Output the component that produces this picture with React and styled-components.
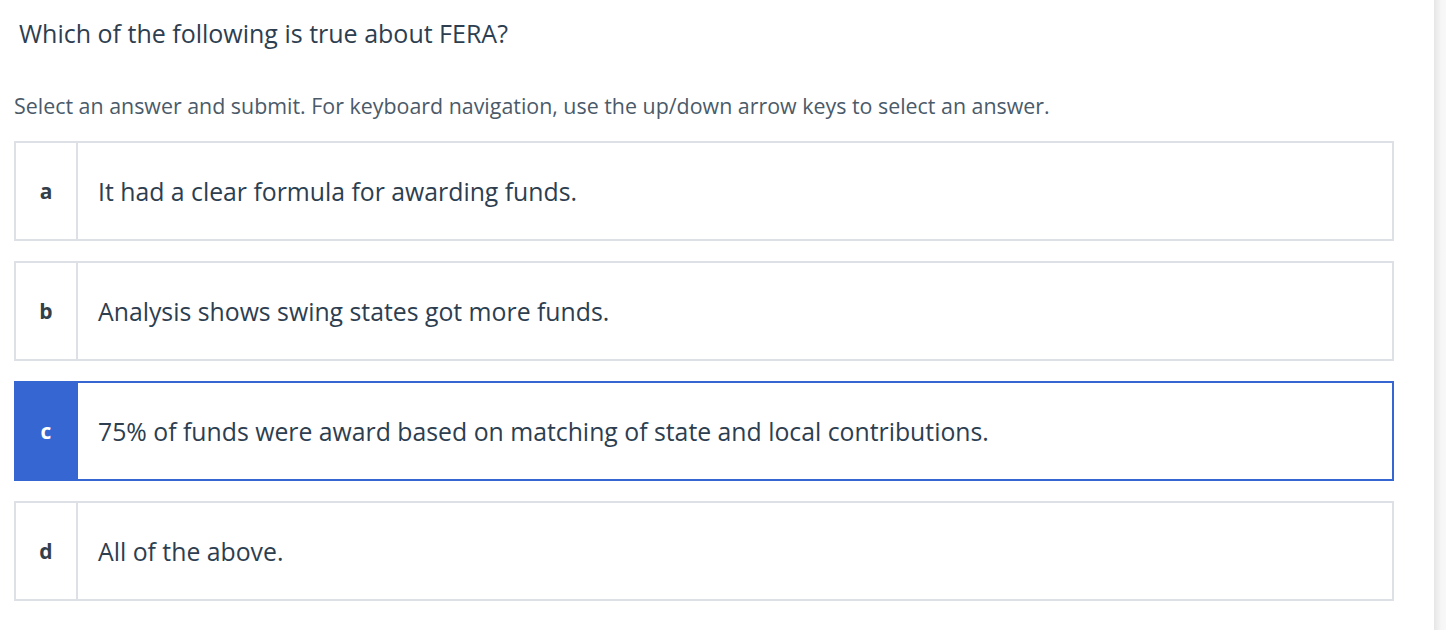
import React from "react";
import styled, { createGlobalStyle } from "styled-components";

const answers = [
  { key: "a", text: "It had a clear formula for awarding funds." },
  { key: "b", text: "Analysis shows swing states got more funds." },
  { key: "c", text: "75% of funds were award based on matching of state and local contributions.", selected: true },
  { key: "d", text: "All of the above." },
];

const App = () => {
  return (
    <Page>
      <GlobalStyle />
      <Main>
        <Question>Which of the following is true about FERA?</Question>
        <Hint>
          Select an answer and submit. For keyboard navigation, use the up/down arrow keys to select an answer.
        </Hint>
        <Options>
          {answers.map((a) => (
            <Option key={a.key} selected={a.selected}>
              <Letter $selected={a.selected}>{a.key}</Letter>
              <Text>{a.text}</Text>
            </Option>
          ))}
        </Options>
      </Main>
      <Edge />
    </Page>
  );
};

const GlobalStyle = createGlobalStyle`
  body {
    margin: 0;
    background: #fff;
    font-family: "Open Sans", "Liberation Sans", sans-serif;
  }
`;

const Page = styled.div`
  display: flex;
  height: 630px;
  overflow: hidden;
`;

const Main = styled.div`
  width: 1434px;
  box-sizing: border-box;
  padding: 14px 40px 0 14px;
`;

const Edge = styled.div`
  flex: 1;
  background: linear-gradient(to right, #e6e6e6, #f6f6f6 60%, #f8f8f8);
`;

const Question = styled.h1`
  margin: 0 0 0 5px;
  font-size: 25px;
  font-weight: 400;
  line-height: 38px;
  color: #2d3e50;
`;

const Hint = styled.p`
  margin: 40px 0 0 0;
  font-size: 21.4px;
  line-height: 28px;
  color: #4b5a69;
`;

const Options = styled.div`
  display: flex;
  flex-direction: column;
  gap: 20px;
  margin-top: 21px;
`;

const Option = styled.div.withConfig({ shouldForwardProp: (p) => p !== "selected" })`
  display: grid;
  grid-template-columns: 62px 1fr;
  height: 100px;
  box-sizing: border-box;
  border: 2px solid ${(p) => (p.selected ? "#3566d2" : "#dde1e5")};
  background: #fff;
`;

const Letter = styled.div`
  display: flex;
  align-items: center;
  justify-content: center;
  font-size: 21px;
  font-weight: 700;
  color: ${(p) => (p.$selected ? "#fff" : "#333f4b")};
  background: ${(p) => (p.$selected ? "#3566d2" : "transparent")};
  border-right: 2px solid ${(p) => (p.$selected ? "#3566d2" : "#dde1e5")};
  margin-left: ${(p) => (p.$selected ? "-2px" : "0")};
  padding-left: ${(p) => (p.$selected ? "2px" : "0")};
`;

const Text = styled.div`
  display: flex;
  align-items: center;
  padding-left: 20px;
  font-size: 24.8px;
  color: #2d3e50;
`;

export default App;
